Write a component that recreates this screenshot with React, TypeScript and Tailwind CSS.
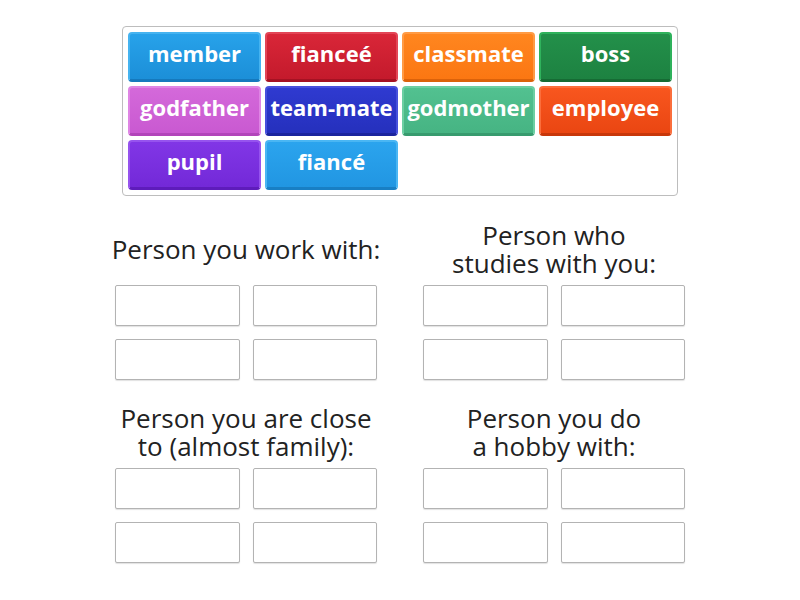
import React from "react";

const tiles: { label: string; cls: string }[] = [
  { label: "member", cls: "bg-gradient-to-b from-[#27a2ea] to-[#1c8fd8] border-[#45b3f0] border-b-[#1579bd]" },
  { label: "fianceé", cls: "bg-gradient-to-b from-[#d92638] to-[#c41a2c] border-[#e34556] border-b-[#a51223]" },
  { label: "classmate", cls: "bg-gradient-to-b from-[#ff861f] to-[#fb7712] border-[#ff9b45] border-b-[#db620a]" },
  { label: "boss", cls: "bg-gradient-to-b from-[#23904a] to-[#1d8241] border-[#2fb25c] border-b-[#166b34]" },
  { label: "godfather", cls: "bg-gradient-to-b from-[#d469da] to-[#c959d1] border-[#df85e4] border-b-[#b245ba]" },
  { label: "team-mate", cls: "bg-gradient-to-b from-[#2f3ad0] to-[#2530bd] border-[#4650dc] border-b-[#1b249e]" },
  { label: "godmother", cls: "bg-gradient-to-b from-[#52c190] to-[#46b483] border-[#6ccfa3] border-b-[#379b6e]" },
  { label: "employee", cls: "bg-gradient-to-b from-[#f8561e] to-[#ea4612] border-[#fb6e3c] border-b-[#c8370a]" },
  { label: "pupil", cls: "bg-gradient-to-b from-[#8136e6] to-[#7329d8] border-[#9653ee] border-b-[#5e1cbb]" },
  { label: "fiancé", cls: "bg-gradient-to-b from-[#2ba4ee] to-[#2196e2] border-[#4ab6f3] border-b-[#187fc4]" },
];

function Box() {
  return (
    <div className="h-[41px] rounded-[2px] border border-[#b3b3b3] bg-white shadow-[0_1px_1px_rgba(0,0,0,0.12)]" />
  );
}

function Group({ lines }: { lines: string[] }) {
  return (
    <div className="flex w-[262px] flex-col items-center">
      <div className="flex h-[56px] w-[300px] flex-col items-center justify-center text-center text-[26px] leading-[28px] text-[#222]">
        {lines.map((l) => (
          <div key={l} className="whitespace-nowrap">{l}</div>
        ))}
      </div>
      <div className="mt-[8px] grid w-full grid-cols-2 gap-x-[13px] gap-y-[13px]">
        <Box />
        <Box />
        <Box />
        <Box />
      </div>
    </div>
  );
}

export default function App() {
  return (
    <div className="h-[600px] w-[800px] bg-white" style={{ fontFamily: '"Open Sans", "Noto Sans", sans-serif' }}>
      <div className="ml-[122px] mt-[26px] w-[556px] rounded-[4px] border border-[#bdbdbd] p-[5px]">
        <div className="grid grid-cols-4 gap-[4px]">
          {tiles.map((t) => (
            <div
              key={t.label}
              className={`flex h-[50px] items-center justify-center rounded-[4px] border-2 border-b-[3px] text-[22px] font-bold leading-none text-white ${t.cls}`}
            >
              <span className="-mt-[7px] whitespace-nowrap">{t.label}</span>
            </div>
          ))}
          <div className="h-[50px]" />
          <div className="h-[50px]" />
        </div>
      </div>
      <div className="ml-[115px] mt-[25px] grid w-[570px] grid-cols-[262px_262px] gap-x-[46px] gap-y-[24px]">
        <Group lines={["Person you work with:"]} />
        <Group lines={["Person who", "studies with you:"]} />
        <Group lines={["Person you are close", "to (almost family):"]} />
        <Group lines={["Person you do", "a hobby with:"]} />
      </div>
    </div>
  );
}
